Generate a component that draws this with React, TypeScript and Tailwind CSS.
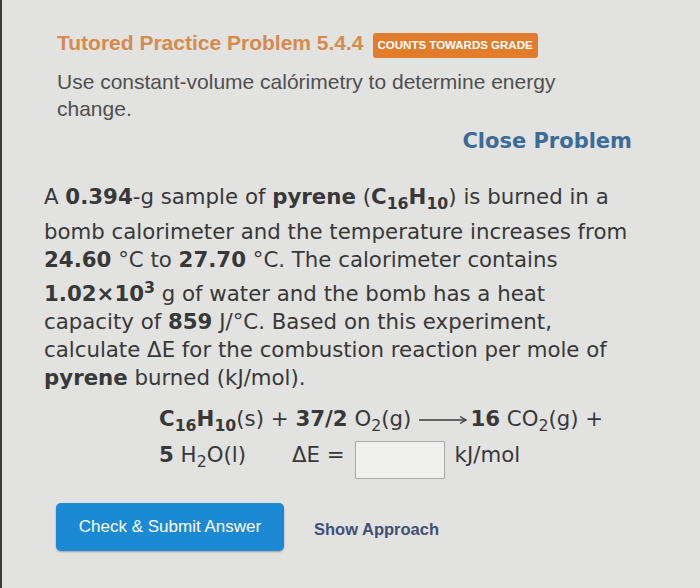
import React from "react";

const V = { fontFamily: '"DejaVu Sans", Verdana, sans-serif' };
const A = { fontFamily: '"Liberation Sans", Arial, sans-serif' };

function Sub({ children }: { children: React.ReactNode }) {
  return <span className="relative top-[0.3em] text-[0.74em] leading-none">{children}</span>;
}
function Sup({ children }: { children: React.ReactNode }) {
  return <span className="relative -top-[0.48em] text-[0.74em] leading-none">{children}</span>;
}

function Arrow() {
  return (
    <svg width="50" height="14" viewBox="0 0 50 14" className="inline-block align-middle ml-[7px] mr-[2px]">
      <line x1="1" y1="7" x2="47" y2="7" stroke="#3a3a3a" strokeWidth="1.4" />
      <path d="M42 3.5 L48 7 L42 10.5" fill="none" stroke="#3a3a3a" strokeWidth="1.4" />
    </svg>
  );
}

export default function App() {
  return (
    <div className="w-[700px] h-[588px] bg-[#e2e2e0] overflow-hidden border-l-2 border-[#3a3a3a]">
      <div className="pl-[55px] pt-[30px]" style={A}>
        <div className="flex items-start gap-[9px]">
          <h1 className="text-[21px] font-bold text-[#d68a4e] leading-[26px]">Tutored Practice Problem 5.4.4</h1>
          <span className="bg-[#e07c2c] text-white text-[11.5px] font-bold px-[5px] h-[25px] flex items-center rounded-[3px] mt-[3px]">
            COUNTS TOWARDS GRADE
          </span>
        </div>
        <p className="text-[21px] text-[#4f4f4f] leading-[27px] mt-[10px]">
          Use constant-volume calórimetry to determine energy
          <br />
          change.
        </p>
      </div>
      <div className="flex justify-end pr-[68px] mt-[5px]">
        <span className="text-[21px] font-bold text-[#3b6b97] leading-[28px]" style={V}>Close Problem</span>
      </div>
      <div className="pl-[42px] mt-[28px] text-[21.3px] text-[#383838] leading-[28px] whitespace-nowrap" style={V}>
        <div>
          A <b>0.394</b>-g sample of <b>pyrene</b> (<b>C<Sub>16</Sub>H<Sub>10</Sub></b>) is burned in a
        </div>
        <div className="mt-[7px]">bomb calorimeter and the temperature increases from</div>
        <div>
          <b>24.60</b> °C to <b>27.70</b> °C. The calorimeter contains
        </div>
        <div className="mt-[6px]">
          <b>1.02×10<Sup>3</Sup></b> g of water and the bomb has a heat
        </div>
        <div>
          capacity of <b>859</b> J/°C. Based on this experiment,
        </div>
        <div>calculate ΔE for the combustion reaction per mole of</div>
        <div>
          <b>pyrene</b> burned (kJ/mol).
        </div>
        <div className="pl-[115px] mt-[13px]">
          <div>
            <b>C<Sub>16</Sub>H<Sub>10</Sub></b>(s) + <b>37/2</b> O<Sub>2</Sub>(g)
            <Arrow />
            <b>16</b> CO<Sub>2</Sub>(g) +
          </div>
          <div className="flex items-start mt-[8px]">
            <span>
              <b>5</b> H<Sub>2</Sub>O(l)
            </span>
            <span className="ml-[46px]">ΔE =</span>
            <span className="ml-[10px] w-[90px] h-[38px] border border-[#a8a8a8] bg-[#efefed] inline-block"></span>
            <span className="ml-[10px]">kJ/mol</span>
          </div>
        </div>
      </div>
      <div className="flex items-center pl-[54px] mt-[24px]" style={A}>
        <button className="w-[228px] h-[48px] rounded-[5px] bg-[#1b89d3] text-white text-[17px] shadow-[0_1px_2px_rgba(0,0,0,0.3)]">
          Check &amp; Submit Answer
        </button>
        <span className="ml-[30px] text-[16.5px] font-bold text-[#3f4f78] mt-[4px]">Show Approach</span>
      </div>
    </div>
  );
}
